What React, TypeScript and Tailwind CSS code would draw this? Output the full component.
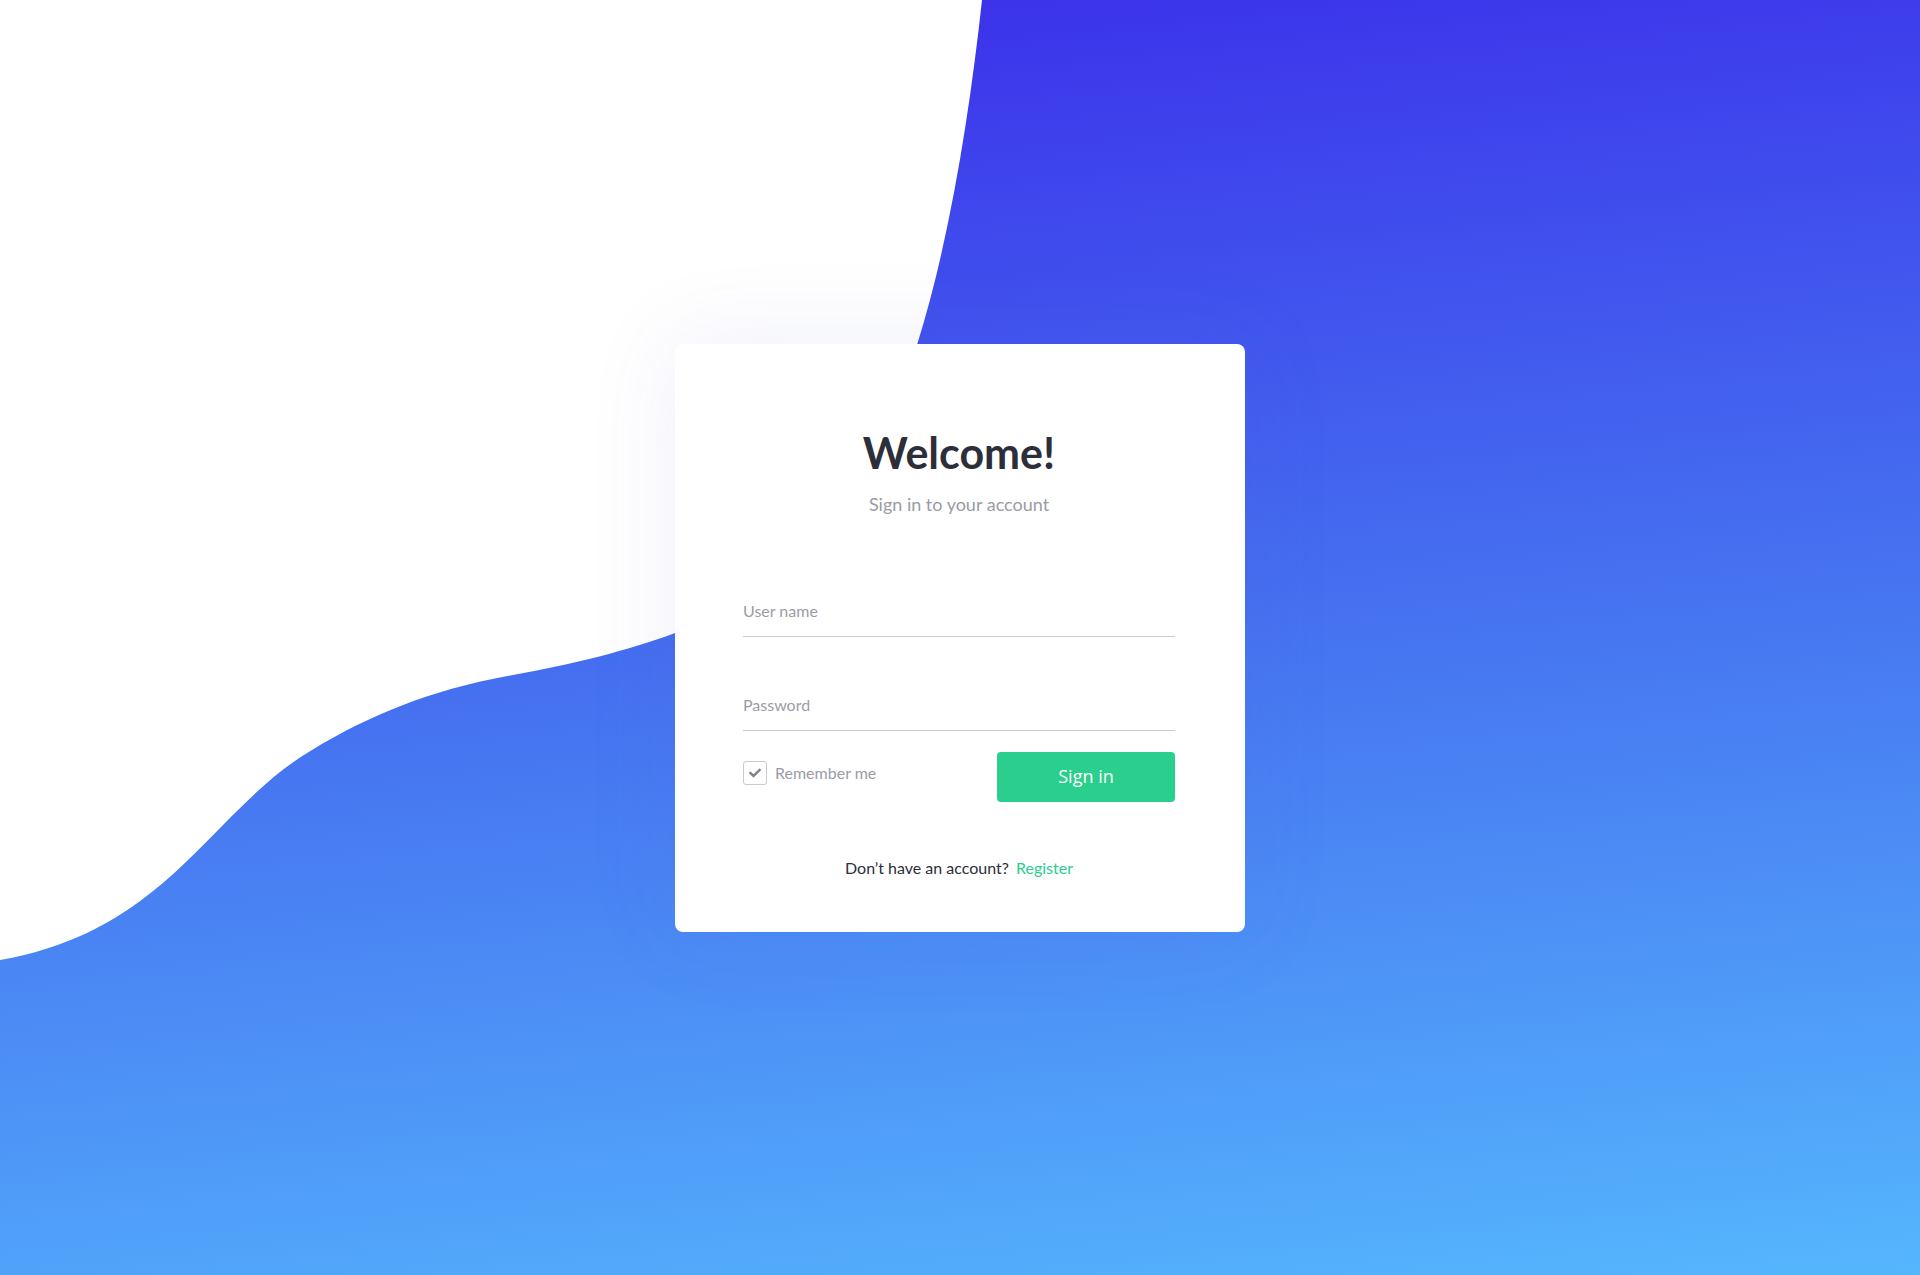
import { FaCheck } from 'react-icons/fa';

function Wave() {
    // white wave over the gradient, top-left corner
    return (
        <svg
            className="absolute inset-0 h-full w-full"
            viewBox="0 0 1920 1275"
            preserveAspectRatio="none"
        >
            <path
                fill="#ffffff"
                d="M0 0 H982 C970 110 950 240 917 345 C880 470 790 590 675 633 C630 650 570 665 513 675 C430 690 370 715 312 750 C210 810 170 930 0 960 Z"
            />
        </svg>
    );
}

export default function App() {
    return (
        <div
            className="relative flex h-[1275px] w-full items-center justify-center overflow-hidden bg-[linear-gradient(174deg,#3a29ea_0%,#4570f0_50%,#55b6fd_100%)]"
            style={{ fontFamily: 'Lato, "Noto Sans", sans-serif' }}
        >
            <Wave />

            <div className="relative z-10 flex w-[570px] flex-col rounded-lg bg-white pt-[89px] pr-[70px] pb-[52px] pl-[68px] shadow-[0_0_90px_rgba(90,100,210,0.1)]">
                {/* Heading */}
                <h1 className="text-center text-[43px] leading-[40px] font-bold text-[#2c2e3a]">
                    Welcome!
                </h1>
                <p className="mt-[17px] text-center text-[18px] leading-7 text-[#9a9ba6]">
                    Sign in to your account
                </p>

                {/* Fields */}
                <input
                    type="text"
                    placeholder="User name"
                    className="mt-[75px] h-[44px] w-full border-b border-[#c7ccd6] pb-2 text-[16px] text-[#2c2e3a] outline-none placeholder:text-[#9b9ca6]"
                />
                <input
                    type="password"
                    placeholder="Password"
                    className="mt-[50px] h-[44px] w-full border-b border-[#c7ccd6] pb-2 text-[16px] text-[#2c2e3a] outline-none placeholder:text-[#9b9ca6]"
                />

                <div className="mt-[21px] flex items-start justify-between">
                    <label className="mt-[9px] flex h-[24px] items-center gap-2 text-[16px] text-[#9b9ca6]">
                        <span className="flex h-[24px] w-[24px] items-center justify-center rounded-[3px] border border-[#c7cad3] bg-white">
                            <FaCheck size={12} className="text-[#80838d]" />
                        </span>
                        Remember me
                    </label>
                    <button
                        className="h-[50px] w-[178px] rounded-[4px] bg-[#2ace8d] text-[18px] font-medium text-white"
                        style={{ fontFamily: '"Open Sans", sans-serif' }}
                    >
                        Sign in
                    </button>
                </div>

                <p className="mt-[54px] text-center text-[16px] leading-6 text-[#2c2e3a]">
                    Don’t have an account?
                    <a href="#" className="ml-[7px] text-[#2ace8d]">
                        Register
                    </a>
                </p>
            </div>
        </div>
    );
}
